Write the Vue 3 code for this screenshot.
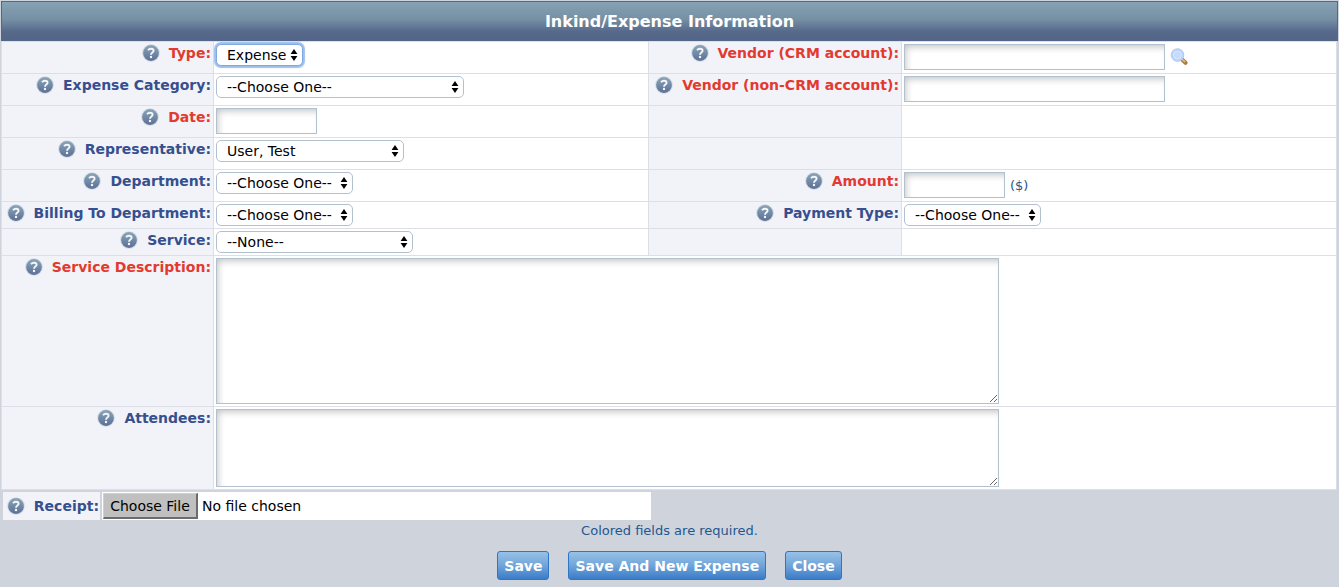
<script setup>
import { reactive } from 'vue'

const choose = ['--Choose One--']

const rows = [
  [
    { id: 'type', label: 'Type', required: true, kind: 'select', size: 'w-type', options: ['Expense', 'Inkind'], active: true },
    { id: 'vendor', label: 'Vendor (CRM account)', required: true, kind: 'text', size: 'w-vendor', lookup: true }
  ],
  [
    { id: 'category', label: 'Expense Category', kind: 'select', size: 'w-category', options: choose },
    { id: 'vendorOther', label: 'Vendor (non-CRM account)', required: true, kind: 'text', size: 'w-vendor' }
  ],
  [{ id: 'date', label: 'Date', required: true, kind: 'text', size: 'w-short' }, { id: 'blank1' }],
  [{ id: 'rep', label: 'Representative', kind: 'select', size: 'w-rep', options: ['User, Test'] }, { id: 'blank2' }],
  [
    { id: 'department', label: 'Department', kind: 'select', size: 'w-choose', options: choose },
    { id: 'amount', label: 'Amount', required: true, kind: 'text', size: 'w-short', unit: '($)' }
  ],
  [
    { id: 'billing', label: 'Billing To Department', kind: 'select', size: 'w-choose', options: choose },
    { id: 'payment', label: 'Payment Type', kind: 'select', size: 'w-choose', options: choose }
  ],
  [{ id: 'service', label: 'Service', kind: 'select', size: 'w-service', options: ['--None--'] }, { id: 'blank3' }]
]

const areas = [
  { id: 'description', label: 'Service Description', required: true, size: 'tall' },
  { id: 'attendees', label: 'Attendees', size: 'short' }
]

const form = reactive({ description: '', attendees: '' })
rows.flat().forEach((f) => {
  if (f.kind) form[f.id] = f.options ? f.options[0] : ''
})
</script>

<template>
  <form class="page" @submit.prevent>
    <svg class="defs" width="0" height="0" aria-hidden="true">
      <defs>
        <linearGradient id="helpFill" x1="0" y1="0" x2="0" y2="1">
          <stop offset="0" stop-color="#8ba6b8" />
          <stop offset="1" stop-color="#5a6f96" />
        </linearGradient>
        <symbol id="help" viewBox="0 0 18 18">
          <circle cx="9" cy="9" r="8.8" fill="#d3dae3" />
          <circle cx="9" cy="9" r="7.9" fill="url(#helpFill)" />
          <path d="M6 6.3C6.8 5.2 7.8 4.8 9 4.8C10.6 4.8 11.6 5.5 11.6 6.8C11.6 8.6 9 8.6 9 10.8" fill="none" stroke="#f4f6f9" stroke-width="1.9" />
          <circle cx="9" cy="13" r="1.2" fill="#f4f6f9" />
        </symbol>
      </defs>
    </svg>

    <h1 class="title">Inkind/Expense Information</h1>

    <table class="grid">
      <colgroup>
        <col class="col-a" />
        <col />
        <col class="col-b" />
        <col />
      </colgroup>
      <tbody>
        <tr v-for="(row, i) in rows" :key="i" :class="i < 5 ? 'roomy' : 'compact'">
          <template v-for="f in row" :key="f.id">
            <td class="name">
              <div v-if="f.label" class="label" :class="{ required: f.required }">
                <svg class="help"><use href="#help" /></svg>
                <label :for="f.id">{{ f.label }}:</label>
              </div>
            </td>
            <td class="value">
              <div v-if="f.kind" class="field">
                <span v-if="f.kind === 'select'" class="select" :class="f.size">
                  <select :id="f.id" v-model="form[f.id]" :class="{ active: f.active }">
                    <option v-for="o in f.options" :key="o">{{ o }}</option>
                  </select>
                  <svg class="arrows" viewBox="0 0 8 12"><path d="M4 0L7.4 5H.6zM4 12L.6 7h6.8z" /></svg>
                </span>
                <input v-else :id="f.id" v-model="form[f.id]" type="text" :class="f.size" />
                <button v-if="f.lookup" type="button" class="lookup" aria-label="Find vendor">
                  <svg viewBox="0 0 18 18">
                    <path d="M12 11.5L15.5 14.8" stroke="#a87a3c" stroke-width="4" stroke-linecap="round" />
                    <path d="M12 11.2L14.6 13.6" stroke="#e0b878" stroke-width="1.8" stroke-linecap="round" />
                    <circle cx="7.5" cy="7" r="6.3" fill="#bdd2f8" stroke="#b3c9ef" stroke-width="1" />
                    <circle cx="7.5" cy="7" r="4" fill="#c6dbfb" stroke="#dae7ff" stroke-width="1" />
                  </svg>
                </button>
                <span v-if="f.unit" class="unit">{{ f.unit }}</span>
              </div>
            </td>
          </template>
        </tr>
        <tr v-for="a in areas" :key="a.id">
          <td class="name">
            <div class="label" :class="{ required: a.required }">
              <svg class="help"><use href="#help" /></svg>
              <label :for="a.id">{{ a.label }}:</label>
            </div>
          </td>
          <td class="value" colspan="3">
            <textarea :id="a.id" v-model="form[a.id]" :class="a.size"></textarea>
          </td>
        </tr>
      </tbody>
    </table>

    <div class="receipt">
      <div class="label receipt-name">
        <svg class="help"><use href="#help" /></svg>
        <label for="receipt">Receipt:</label>
      </div>
      <div class="receipt-value"><input id="receipt" type="file" /></div>
    </div>

    <p class="note">Colored fields are required.</p>
    <div class="actions">
      <button type="submit">Save</button>
      <button type="button">Save And New Expense</button>
      <button type="button">Close</button>
    </div>
  </form>
</template>

<style>
body {
  background: #cfd3dc;
}
</style>

<style scoped>
.page {
  padding: 1px 1px 7px;
  font-family: "DejaVu Sans", Verdana, sans-serif;
  font-size: 14px;
}
.page * {
  box-sizing: border-box;
}
.defs {
  display: block;
}
.title {
  margin: 0;
  height: 40px;
  border: 1px solid #54678a;
  background: linear-gradient(#86a2b4, #7690a4 45%, #56698b 78%, #546688);
  color: #fff;
  font-size: 16px;
  line-height: 40px;
  text-align: center;
}
.grid {
  width: calc(100% - 1px);
  table-layout: fixed;
  border-spacing: 0;
  border: solid #dcdfe8;
  border-width: 1px 0 0 1px;
}
.col-a {
  width: 212px;
}
.col-b {
  width: 253px;
}
td {
  padding: 2px;
  vertical-align: top;
  background: #fff;
  border: solid #dcdfe8;
  border-width: 0 1px 1px 0;
}
td.name {
  background: #f2f3f8;
}
.roomy td {
  height: 32px;
}
.compact td {
  height: 27px;
}
.label {
  display: flex;
  justify-content: flex-end;
  align-items: center;
  gap: 9px;
  color: #364f8e;
  font-weight: bold;
  line-height: 18px;
  white-space: nowrap;
}
.label.required {
  color: #e33a30;
}
.help {
  flex: none;
  width: 18px;
  height: 18px;
}
.field {
  display: flex;
  align-items: center;
}
input[type="text"],
textarea {
  border: 1px solid #b3c0ce;
  border-radius: 0;
  background: #fff;
  box-shadow: inset 3px 4px 7px -2px #c4c4c4;
  font: inherit;
  outline: none;
}
input[type="text"] {
  height: 26px;
  padding: 2px 4px;
}
textarea {
  display: block;
  width: 783px;
  max-width: 100%;
  padding: 4px;
}
.tall {
  height: 146px;
}
.short {
  height: 78px;
}
.select {
  position: relative;
  display: block;
  height: 22px;
}
select {
  display: block;
  width: 100%;
  height: 22px;
  padding: 0 13px 0 10px;
  appearance: none;
  border: 1px solid #b3c0ce;
  border-radius: 5px;
  background: #fff;
  color: #000;
  font: inherit;
  line-height: 20px;
  outline: none;
}
select.active {
  border-color: #7fa8de;
  box-shadow: 0 0 1px 2px #9dbfee;
}
.arrows {
  position: absolute;
  top: 5px;
  right: 5px;
  width: 8px;
  height: 12px;
  pointer-events: none;
}
.w-type {
  width: 87px;
}
.w-category {
  width: 248px;
}
.w-rep {
  width: 188px;
}
.w-choose {
  width: 137px;
}
.w-service {
  width: 197px;
}
.w-vendor {
  width: 261px;
}
.w-short {
  width: 101px;
}
.lookup {
  margin-left: 5px;
  padding: 0;
  border: 0;
  background: none;
  line-height: 0;
}
.lookup svg {
  width: 18px;
  height: 18px;
}
.unit {
  margin-left: 5px;
  color: #22588f;
  font-size: 13px;
}
.receipt {
  display: flex;
  gap: 2px;
  width: 48.5%;
  height: 28px;
  margin: 2px 0 0 2px;
}
.receipt-name {
  flex: none;
  width: 97px;
  padding-right: 1px;
  background: #f2f3f8;
}
.receipt-value {
  flex: 1;
  padding: 1px;
  background: #fff;
}
.receipt input {
  display: block;
  width: 100%;
  height: 26px;
  font: inherit;
  line-height: 24px;
  color: #000;
}
.receipt input::file-selector-button {
  box-sizing: border-box;
  width: 95px;
  height: 26px;
  margin: 0 4px 0 0;
  padding: 0;
  border: solid;
  border-width: 1px 2px 2px 1px;
  border-color: #d0d0d0 #6c6c6c #6c6c6c #d0d0d0;
  background: #c0c0c0;
  color: #000;
  font: inherit;
}
.note {
  margin: 2px 0 0;
  color: #22588f;
  font-size: 13px;
  line-height: 18px;
  text-align: center;
}
.actions {
  display: flex;
  justify-content: center;
  gap: 19px;
  margin-top: 11px;
}
.actions button {
  height: 29px;
  padding: 0 6px;
  border: 1px solid #2f76c8;
  border-radius: 3px;
  background: linear-gradient(#98c1e6, #70a5da 50%, #3a7cc8);
  color: #fff;
  font: inherit;
  font-weight: bold;
}
</style>
